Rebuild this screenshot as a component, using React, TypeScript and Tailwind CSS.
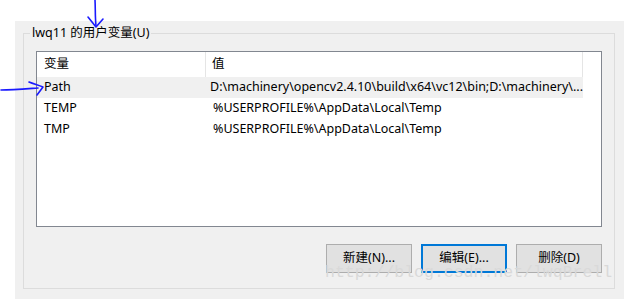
import React from 'react';

const rows = [
  { name: 'Path', value: 'D:\\machinery\\opencv2.4.10\\build\\x64\\vc12\\bin;D:\\machinery\\...', selected: true },
  { name: 'TEMP', value: '%USERPROFILE%\\AppData\\Local\\Temp', selected: false },
  { name: 'TMP', value: '%USERPROFILE%\\AppData\\Local\\Temp', selected: false },
];

const font = { fontFamily: '"Noto Sans", "Noto Sans CJK SC", sans-serif' };

function Btn({ label, focused }: { label: string; focused?: boolean }) {
  return (
    <button
      className={`w-[86px] h-[29px] bg-[#e1e1e1] text-[12.5px] text-black flex items-center justify-center ${
        focused ? 'border-2 border-[#0078d7]' : 'border border-[#adadad]'
      }`}
    >
      {label}
    </button>
  );
}

export default function App() {
  return (
    <div className="relative w-[624px] h-[299px] bg-white pt-[21px] pl-[15px] flex flex-col overflow-hidden" style={font}>
      <div className="flex-1 bg-[#f0f0f0] flex flex-col">
        <fieldset className="ml-[8px] mr-[9px] mt-[4px] border border-[#dcdcdc] px-[12px] pb-[15px] flex flex-col">
          <legend className="ml-[-6px] px-[2px] text-[12.5px] leading-[16px] text-black">lwq11 的用户变量(U)</legend>

          {/* list view */}
          <div className="mt-[10px] h-[176px] bg-white border border-[#828790] text-[12.5px] text-black">
            <div className="flex h-[25px] items-center w-[546px]">
              <div className="w-[169px] h-full pl-[7px] flex items-center border-r border-[#e5e5e5]">变量</div>
              <div className="flex-1 h-full pl-[6px] flex items-center border-r border-[#e5e5e5]">值</div>
            </div>
            {rows.map(r => (
              <div key={r.name} className={`flex h-[21px] items-center w-[546px] ${r.selected ? 'bg-[#f0f0f0]' : ''}`}>
                <div className="w-[169px] pl-[7px]">{r.name}</div>
                <div className="flex-1 pl-[7px] whitespace-nowrap">{r.value}</div>
              </div>
            ))}
          </div>

          <div className="mt-[17px] flex justify-end gap-[9px]">
            <Btn label="新建(N)..." />
            <Btn label="编辑(E)..." focused />
            <Btn label="删除(D)" />
          </div>
        </fieldset>
      </div>

      {/* watermark */}
      <div
        className="absolute left-[325px] top-[262px] text-[16.5px] leading-[22px] text-[#d9d9d9] whitespace-nowrap"
        style={{ fontFamily: '"Liberation Mono", monospace' }}
      >
        http://blog.csdn.net/lwqBrell
      </div>

      {/* hand drawn arrows */}
      <svg className="absolute left-0 top-0" width="624" height="299" fill="none" stroke="#1a1aff" strokeWidth="1.6" strokeLinecap="round" strokeLinejoin="round">
        <path d="M95 0 C95.5 8 95 16 96 26" />
        <path d="M88 17 L96 27 L103 19" />
        <path d="M1 90 C12 90 24 89 38 88" />
        <path d="M29 82 C34 84 38 85 43 87 L37 95" />
      </svg>
    </div>
  );
}
